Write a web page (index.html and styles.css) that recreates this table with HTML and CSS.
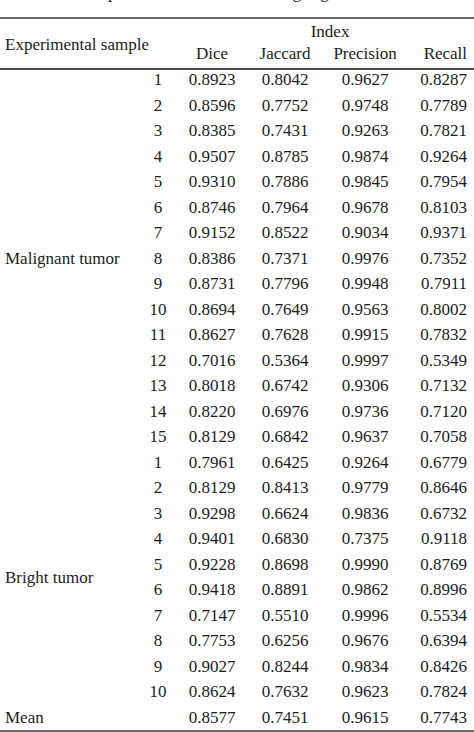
FILE: index.html
```html
<!DOCTYPE html>
<html lang="en">
<head>
<meta charset="utf-8">
<title>Segmentation results</title>
<link rel="stylesheet" href="styles.css">
</head>
<body>
<div class="caption"><span class="caption-text">Comparison of the results using algorithm</span></div>
<table class="results">
  <colgroup>
    <col class="c-label"><col class="c-num"><col class="c-dice"><col class="c-jac"><col class="c-prec"><col class="c-rec">
  </colgroup>
  <thead>
    <tr class="h1">
      <th class="sample" colspan="2" rowspan="2">Experimental sample</th>
      <th class="index" colspan="4">Index</th>
    </tr>
    <tr class="h2">
      <th>Dice</th><th>Jaccard</th><th>Precision</th><th class="rec">Recall</th>
    </tr>
  </thead>
  <tbody>
    <tr><td class="group" rowspan="15">Malignant tumor</td><td class="n">1</td><td>0.8923</td><td>0.8042</td><td>0.9627</td><td class="rec">0.8287</td></tr>
    <tr><td class="n">2</td><td>0.8596</td><td>0.7752</td><td>0.9748</td><td class="rec">0.7789</td></tr>
    <tr><td class="n">3</td><td>0.8385</td><td>0.7431</td><td>0.9263</td><td class="rec">0.7821</td></tr>
    <tr><td class="n">4</td><td>0.9507</td><td>0.8785</td><td>0.9874</td><td class="rec">0.9264</td></tr>
    <tr><td class="n">5</td><td>0.9310</td><td>0.7886</td><td>0.9845</td><td class="rec">0.7954</td></tr>
    <tr><td class="n">6</td><td>0.8746</td><td>0.7964</td><td>0.9678</td><td class="rec">0.8103</td></tr>
    <tr><td class="n">7</td><td>0.9152</td><td>0.8522</td><td>0.9034</td><td class="rec">0.9371</td></tr>
    <tr><td class="n">8</td><td>0.8386</td><td>0.7371</td><td>0.9976</td><td class="rec">0.7352</td></tr>
    <tr><td class="n">9</td><td>0.8731</td><td>0.7796</td><td>0.9948</td><td class="rec">0.7911</td></tr>
    <tr><td class="n">10</td><td>0.8694</td><td>0.7649</td><td>0.9563</td><td class="rec">0.8002</td></tr>
    <tr><td class="n">11</td><td>0.8627</td><td>0.7628</td><td>0.9915</td><td class="rec">0.7832</td></tr>
    <tr><td class="n">12</td><td>0.7016</td><td>0.5364</td><td>0.9997</td><td class="rec">0.5349</td></tr>
    <tr><td class="n">13</td><td>0.8018</td><td>0.6742</td><td>0.9306</td><td class="rec">0.7132</td></tr>
    <tr><td class="n">14</td><td>0.8220</td><td>0.6976</td><td>0.9736</td><td class="rec">0.7120</td></tr>
    <tr><td class="n">15</td><td>0.8129</td><td>0.6842</td><td>0.9637</td><td class="rec">0.7058</td></tr>
    <tr><td class="group" rowspan="10">Bright tumor</td><td class="n">1</td><td>0.7961</td><td>0.6425</td><td>0.9264</td><td class="rec">0.6779</td></tr>
    <tr><td class="n">2</td><td>0.8129</td><td>0.8413</td><td>0.9779</td><td class="rec">0.8646</td></tr>
    <tr><td class="n">3</td><td>0.9298</td><td>0.6624</td><td>0.9836</td><td class="rec">0.6732</td></tr>
    <tr><td class="n">4</td><td>0.9401</td><td>0.6830</td><td>0.7375</td><td class="rec">0.9118</td></tr>
    <tr><td class="n">5</td><td>0.9228</td><td>0.8698</td><td>0.9990</td><td class="rec">0.8769</td></tr>
    <tr><td class="n">6</td><td>0.9418</td><td>0.8891</td><td>0.9862</td><td class="rec">0.8996</td></tr>
    <tr><td class="n">7</td><td>0.7147</td><td>0.5510</td><td>0.9996</td><td class="rec">0.5534</td></tr>
    <tr><td class="n">8</td><td>0.7753</td><td>0.6256</td><td>0.9676</td><td class="rec">0.6394</td></tr>
    <tr><td class="n">9</td><td>0.9027</td><td>0.8244</td><td>0.9834</td><td class="rec">0.8426</td></tr>
    <tr><td class="n">10</td><td>0.8624</td><td>0.7632</td><td>0.9623</td><td class="rec">0.7824</td></tr>
    <tr class="mean"><td class="group">Mean</td><td class="n"></td><td>0.8577</td><td>0.7451</td><td>0.9615</td><td class="rec">0.7743</td></tr>
  </tbody>
</table>
</body>
</html>
```

FILE: styles.css
```css
html, body {
  margin: 0;
  padding: 0;
  background: #ffffff;
  overflow: hidden;
}

body {
  width: 474px;
  height: 732px;
  font-family: "Liberation Serif", "Times New Roman", serif;
  font-size: 17px;
  color: #1c1c1c;
}

.caption {
  height: 17px;
  overflow: hidden;
}

.caption-text {
  display: block;
  line-height: 20px;
  margin-top: -17.5px;
  padding-left: 75px;
  word-spacing: 2.5px;
  white-space: nowrap;
}

.results {
  width: 474px;
  border-collapse: separate;
  border-spacing: 0;
  border-top: 2px solid #6a6a6a;
  table-layout: fixed;
}

.c-label { width: 140px; }
.c-num { width: 36px; }
.c-dice { width: 72px; }
.c-jac { width: 74px; }
.c-prec { width: 86px; }
.c-rec { width: 66px; }

th {
  font-weight: normal;
  padding: 0;
}

.h1 th.index {
  height: 23px;
  line-height: 20px;
  vertical-align: bottom;
  text-align: center;
  padding-left: 10px;
}

.h2 th {
  height: 24px;
  line-height: 20px;
  vertical-align: middle;
  text-align: center;
  border-bottom: 2px solid #4a4a4a;
  padding-bottom: 2px;
}

th.sample {
  text-align: left;
  padding-left: 5px;
  vertical-align: middle;
  border-bottom: 2px solid #4a4a4a;
  white-space: nowrap;
  padding-top: 2px;
}

.h2 th.rec {
  text-align: right;
  padding-right: 7px;
}

tbody tr {
  height: 25.5px;
}

td {
  padding: 0 0 5px 0;
  line-height: 20px;
  vertical-align: middle;
  text-align: center;
  white-space: nowrap;
}

td.group {
  text-align: left;
  padding-left: 5px;
}

td.n {
  text-align: center;
  padding-left: 0;
}

td.rec {
  text-align: right;
  padding-right: 7px;
}

tr.mean {
  height: 22.5px;
}

tr.mean td {
  padding-bottom: 2px;
  border-bottom: 4px solid #6a6a6a;
}
```
